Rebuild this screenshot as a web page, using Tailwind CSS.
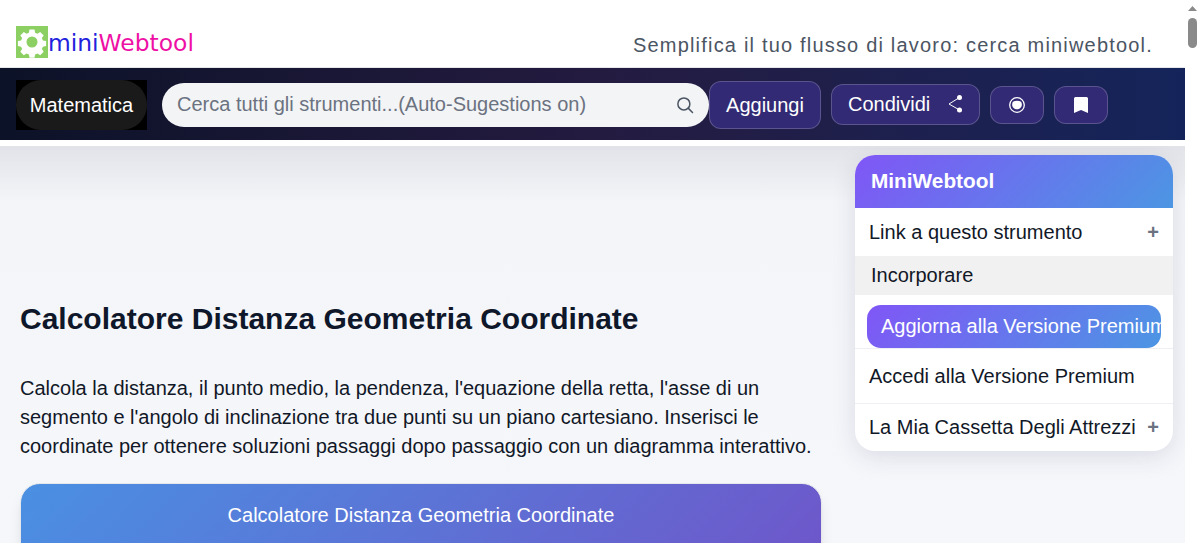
<!DOCTYPE html>
<html><head><meta charset="utf-8"><script src="https://cdn.jsdelivr.net/npm/@tailwindcss/browser@4"></script></head>
<body class="overflow-hidden bg-white">
<div class="flex h-[543px] w-[1200px] overflow-hidden font-['Liberation_Sans',sans-serif]">
<div class="w-[1185px] h-[543px] flex flex-col shrink-0 overflow-hidden">
  <header class="h-[68px] shrink-0 flex justify-between items-end px-4 pb-[3px] bg-white border-b border-[#e5e7eb]">
    <div class="flex items-center h-[32px] mb-[6px]">
      <svg width="32" height="32" viewBox="0 0 32 32" class="shrink-0"><rect width="32" height="32" fill="#8ccf62"/><path fill="#fff" d="M13.500 3.500h5l.6 3.200 2.400 1 2.700-1.800 3.500 3.500-1.800 2.700 1 2.400 3.200.6v5l-3.200.6-1 2.400 1.800 2.700-3.500 3.500-2.700-1.800-2.400 1-.6 3.200h-5l-.6-3.200-2.400-1-2.700 1.800-3.500-3.500 1.800-2.700-1-2.400-3.200-.6v-5l3.200-.6 1-2.400-1.800-2.700 3.500-3.500 2.700 1.800 2.400-1zM16 10.500a5.500 5.500 0 1 0 0 11 5.500 5.500 0 0 0 0-11z"/></svg>
      <span class="font-['DejaVu_Sans',sans-serif] text-[23.400px] leading-[32px] text-[#2222dd] pt-[2px]">mini<span class="text-[#ee0fa5]">Webtool</span></span>
    </div>
    <div class="text-[20px] leading-[28px] tracking-[1.190px] text-[#4b5563] pr-4 mb-[5px] whitespace-nowrap">Semplifica il tuo flusso di lavoro: cerca miniwebtool.</div>
  </header>
  <nav class="h-[72px] shrink-0 flex items-center pl-4 pt-[1px] bg-linear-to-r from-[#0c1228] via-[#241b40] to-[#14245a]">
    <div class="bg-black h-[50px] w-[131px] shrink-0">
      <div class="h-full rounded-[25px] bg-[#1a1a1a] text-white text-[20px] flex items-center justify-center">Matematica</div>
    </div>
    <div class="ml-[15px] w-[547px] h-[44px] shrink-0 rounded-[22px] bg-[#f3f4f6] flex items-center justify-between pl-[15px] pr-[15px]">
      <span class="text-[#6b7280] text-[20px] whitespace-nowrap pb-[2px]">Cerca tutti gli strumenti...(Auto-Sugestions on)</span>
      <svg width="18" height="18" viewBox="0 0 24 24" fill="none" stroke="#4b5563" stroke-width="2" stroke-linecap="round"><circle cx="10.500" cy="10.500" r="8"/><path d="M16.500 16.500L22 22"/></svg>
    </div>
    <button class="h-[48px] w-[112px] shrink-0 rounded-[12px] border border-white/20 bg-[#322a74] text-white text-[20px] flex items-center justify-center">Aggiungi</button>
    <button class="ml-[10px] h-[41px] w-[149px] shrink-0 rounded-[12px] border border-white/20 bg-[#322a74] text-white text-[20px] flex items-center pl-4 -mt-[1px]">
      <span>Condividi</span>
      <svg class="ml-[17px]" width="16" height="20" viewBox="0 0 16 20" fill="none" stroke="#fff" stroke-width="1"><path d="M12.500 3.500L2 10L12.500 16"/><circle cx="12.500" cy="3.500" r="2.500" fill="#fff" stroke="none"/><circle cx="12.500" cy="16" r="2.500" fill="#fff" stroke="none"/></svg>
    </button>
    <button class="ml-[10px] h-[38px] w-[54px] shrink-0 rounded-[12px] border border-white/20 bg-[#322a74] flex items-center justify-center">
      <svg width="16" height="16" viewBox="0 0 16 16"><circle cx="8" cy="8" r="7.300" fill="none" stroke="#fff" stroke-width="1.300"/><path d="M3.200 7a4.800 3.200 0 0 1 9.600 0c.4 3-2 5.200-4.800 5.200S2.800 10 3.200 7z" fill="#fff"/></svg>
    </button>
    <button class="ml-[10px] h-[38px] w-[54px] shrink-0 rounded-[12px] border border-white/20 bg-[#322a74] flex items-center justify-center">
      <svg width="14" height="16" viewBox="0 0 14 16"><path d="M0 1.500A1.500 1.500 0 0 1 1.500 0h11A1.500 1.500 0 0 1 14 1.500V16l-7-3-7 3z" fill="#fff"/></svg>
    </button>
  </nav>
  <div class="h-[6px] shrink-0 bg-white"></div>
  <div class="flex-1 min-h-0 flex bg-linear-to-b from-[#e2e3e8] via-[#f4f5f9] via-[56px] to-[#f6f7fb] overflow-hidden">
    <main class="w-[855px] shrink-0 pl-5 pr-[33px] pt-[155px]">
      <h1 class="text-[30px] leading-[36px] font-bold text-[#0f172a]">Calcolatore Distanza Geometria Coordinate</h1>
      <p class="mt-[37px] text-[20px] leading-[29px] text-[#111827]">Calcola la distanza, il punto medio, la pendenza, l'equazione della retta, l'asse di un segmento e l'angolo di inclinazione tra due punti su un piano cartesiano. Inserisci le coordinate per ottenere soluzioni passaggi dopo passaggio con un diagramma interattivo.</p>
      <section class="mt-[22px] w-[802px] h-[100px] rounded-[20px] border border-[#e5e7eb] bg-linear-[135deg] from-[#4a90e2] to-[#6f55c9] shadow-lg text-white text-[20px] text-center pt-[16px]">Calcolatore Distanza Geometria Coordinate</section>
    </main>
    <aside class="w-[318px] shrink-0 h-[296px] mt-[9px] rounded-[20px] bg-white shadow-[0_6px_24px_rgba(30,40,80,0.12)] overflow-hidden text-[#111827] text-[20px]">
      <div class="h-[53px] flex items-center pl-4 pb-[2px] bg-linear-[135deg] from-[#8056f6] to-[#4c96e3] text-white font-bold text-[20.800px]">MiniWebtool</div>
      <div class="h-[48px] flex items-center justify-between pl-[14px] pr-[14px]"><span>Link a questo strumento</span><span class="text-[#6b7280] font-bold text-[20px]">+</span></div>
      <div class="h-[39px] flex items-center pl-4 pb-[2px] bg-[#f1f1f1]">Incorporare</div>
      <div class="h-[54px] border-b border-[#eeeff2] pl-3 pr-3 pt-[10px]">
        <div class="h-[43px] rounded-[14px] bg-linear-[135deg] from-[#8056f6] to-[#4c96e3] text-white flex items-center pl-[14px] pb-[2px] overflow-hidden whitespace-nowrap">Aggiorna alla Versione Premium</div>
      </div>
      <div class="h-[55px] border-b border-[#eeeff2] flex items-center pl-[14px]">Accedi alla Versione Premium</div>
      <div class="h-[47px] flex items-center justify-between pl-[14px] pr-[14px] pb-[2px]"><span>La Mia Cassetta Degli Attrezzi</span><span class="text-[#6b7280] font-bold text-[20px]">+</span></div>
    </aside>
  </div>
</div>
<div class="w-[15px] shrink-0 h-[543px] bg-white relative">
  <svg class="absolute left-[3px] top-[6px]" width="9" height="5" viewBox="0 0 9 5"><path d="M4.500 0L9 5H0z" fill="#8a8a8a"/></svg>
  <div class="absolute left-[3px] top-[18px] w-[9px] h-[30px] rounded-[5px] bg-[#8a8a8a]"></div>
</div>
</div>
</body></html>
